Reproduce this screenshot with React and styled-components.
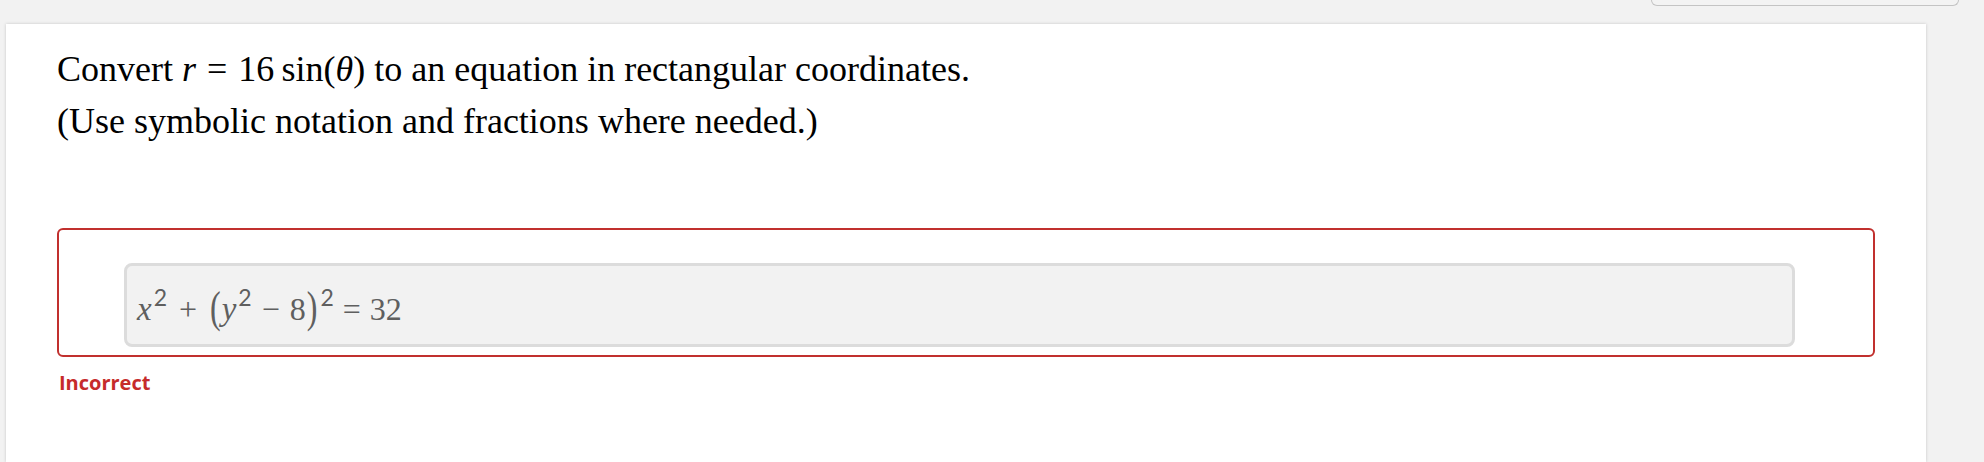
import React from "react";
import styled, { createGlobalStyle } from "styled-components";

const Global = createGlobalStyle`
  html, body { margin: 0; padding: 0; background: #f2f2f2; }
  body { width: 1984px; height: 462px; overflow: hidden; }
`;

const Page = styled.div`
  display: flex;
  flex-direction: column;
  width: 1984px;
  height: 462px;
  background: #f2f2f2;
`;

const TopBar = styled.div`
  display: flex;
  justify-content: flex-end;
  height: 24px;
  padding-right: 25px;
  box-sizing: border-box;
`;

const TopTab = styled.div`
  width: 308px;
  height: 6px;
  box-sizing: border-box;
  border: 1.5px solid #c4c4c4;
  border-top: none;
  border-radius: 0 0 6px 6px;
  background: #f3f3f3;
`;

const Panel = styled.div`
  margin-left: 6px;
  width: 1920px;
  flex: 1;
  background: #ffffff;
  box-shadow: 0 0 3px rgba(0, 0, 0, 0.18);
  padding: 19px 51px 0 51px;
  box-sizing: border-box;
`;

const Question = styled.p`
  margin: 0;
  font-family: "Liberation Serif", "Times New Roman", serif;
  font-size: 36px;
  line-height: 52px;
  color: #000;
`;

const Var = styled.span`
  font-style: italic;
`;

const Op = styled.span`
  padding: 0 11px;
`;

const AnswerFrame = styled.div`
  margin-top: 81px;
  border: 2px solid #c1302e;
  border-radius: 6px;
  padding: 33px 78px 8px 65px;
`;

const InputBox = styled.div`
  height: 84px;
  box-sizing: border-box;
  border: 3px solid #dcdcdc;
  border-radius: 8px;
  background: #f2f2f2;
  padding: 0 10px;
  display: flex;
  align-items: center;
`;

const MathLine = styled.div`
  font-family: "Liberation Serif", "Times New Roman", serif;
  font-size: 32px;
  line-height: 40px;
  color: #5f5f5f;
  margin-top: 10px;
  white-space: nowrap;
`;

const MVar = styled.span`
  font-style: italic;
  font-family: "Liberation Serif", "Times New Roman", serif;
  font-size: 33px;
`;

const Sup = styled.span`
  font-family: "Lato", "Liberation Sans", sans-serif;
  font-size: 23px;
  position: relative;
  top: -14px;
  margin-left: 2px;
`;

const MOp = styled.span`
  padding: 0 ${(p) => p.$pad || 8}px;
`;

const BigParen = styled.span`
  display: inline-block;
  font-weight: 300;
  transform: scaleY(1.4);
  transform-origin: 50% 65%;
  margin: 0 ${(p) => p.$m || 1}px;
`;

const Feedback = styled.div`
  margin-top: 12px;
  padding-left: 2px;
  font-family: "Open Sans", "Liberation Sans", sans-serif;
  font-weight: 700;
  font-size: 20px;
  line-height: 28px;
  color: #c62b2b;
`;

export default function App() {
  return (
    <Page>
      <Global />
      <TopBar>
        <TopTab />
      </TopBar>
      <Panel>
        <Question>
          Convert <Var>r</Var>
          <Op>=</Op>16&#8201;sin(<Var>θ</Var>) to an equation in rectangular coordinates.
        </Question>
        <Question>(Use symbolic notation and fractions where needed.)</Question>
        <AnswerFrame>
          <InputBox>
            <MathLine>
              <MVar>x</MVar>
              <Sup>2</Sup>
              <MOp $pad={12}>+</MOp>
              <BigParen>(</BigParen>
              <MVar>y</MVar>
              <Sup>2</Sup>
              <MOp $pad={10}>−</MOp>
              <span>8</span>
              <BigParen>)</BigParen>
              <Sup>2</Sup>
              <MOp $pad={9}>=</MOp>
              <span>32</span>
            </MathLine>
          </InputBox>
        </AnswerFrame>
        <Feedback>Incorrect</Feedback>
      </Panel>
    </Page>
  );
}
